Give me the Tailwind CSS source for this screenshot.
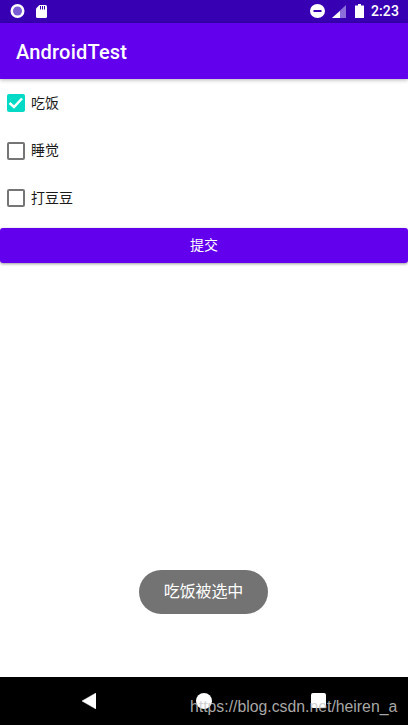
<!DOCTYPE html>
<html lang="zh">
<head>
    <meta charset="UTF-8">
    <title>AndroidTest</title>
    <script src="https://cdn.jsdelivr.net/npm/@tailwindcss/browser@4"></script>
</head>
<body class="bg-white font-['Roboto','Noto_Sans_CJK_SC',sans-serif]">
    <div class="relative w-[408px] h-[725px] overflow-hidden flex flex-col bg-white">
        <!-- status bar -->
        <div class="h-[23px] bg-[#3700b3] flex items-center px-[10px] text-white">
            <svg class="w-[15px] h-[14px] mt-[-1px]" viewBox="0 0 15 14"><circle cx="7.5" cy="7" r="7" fill="#fff"/><circle cx="7.5" cy="7" r="4.5" fill="#7a5bd6"/></svg>
            <svg class="w-[11px] h-[13px] ml-[11px] mt-[-1px]" viewBox="0 0 11 13"><path d="M3.5 0H9.5Q11 0 11 1.5V11.5Q11 13 9.5 13H1.5Q0 13 0 11.5V3.5Z" fill="#fff"/><path d="M4.5 1V4.5M6.5 1V4.5M8.5 1V4.5" stroke="#3700b3" stroke-width="1"/></svg>
            <div class="ml-auto flex items-center">
                <svg class="w-[15px] h-[14px] mt-[-1px]" viewBox="0 0 15 14"><ellipse cx="7.5" cy="7" rx="7.5" ry="7" fill="#fff"/><rect x="3.5" y="6" width="8" height="2" fill="#3700b3"/></svg>
                <svg class="w-[14px] h-[13px] ml-[7px] mt-[-1px]" viewBox="0 0 14 13"><path d="M14 0V13H0Z" fill="#8a70d8"/><path d="M8 6V13H0Z" fill="#fff"/></svg>
                <svg class="w-[9px] h-[14px] ml-[9px] mt-[-1px]" viewBox="0 0 9 14"><path d="M3 0H6V1.5H9V14H0V1.5H3Z" fill="#fff"/></svg>
                <span class="ml-[7px] w-[27px] text-[14px] leading-[15px] mt-[-1px] font-medium tracking-[0.1px] whitespace-nowrap">2:23</span>
            </div>
        </div>
        <!-- app bar -->
        <div class="h-[56px] bg-[#6200ee] flex items-center px-[16px] pt-[2px] shadow-[0_1px_4px_rgba(0,0,0,0.3)] z-10">
            <span class="text-white text-[20px] font-medium tracking-[0.2px]">AndroidTest</span>
        </div>
        <!-- checkboxes -->
        <div class="flex flex-col">
            <div class="h-[48px] flex items-center pl-[7px]">
                <span class="w-[18px] h-[18px] rounded-[2px] bg-[#03dac5] flex items-center justify-center">
                    <svg class="w-[18px] h-[18px]" viewBox="0 0 18 18"><path d="M2.5 9L7 13L15 4.5" fill="none" stroke="#fff" stroke-width="2.5"/></svg>
                </span>
                <span class="ml-[6px] text-[14px] text-[#1a1a1a]">吃饭</span>
            </div>
            <div class="h-[47px] flex items-center pl-[7px]">
                <span class="w-[18px] h-[18px] rounded-[2px] border-2 border-[#757575]"></span>
                <span class="ml-[6px] text-[14px] text-[#1a1a1a]">睡觉</span>
            </div>
            <div class="h-[48px] flex items-center pl-[7px]">
                <span class="w-[18px] h-[18px] rounded-[2px] border-2 border-[#757575]"></span>
                <span class="ml-[6px] text-[14px] text-[#1a1a1a]">打豆豆</span>
            </div>
        </div>
        <button class="mt-[6px] h-[35px] w-full bg-[#6200ee] text-white text-[14px] rounded-[3px] shadow-[0_1px_3px_rgba(0,0,0,0.4)]">提交</button>
        <div class="flex-1"></div>
        <!-- nav bar -->
        <div class="h-[48px] bg-black flex items-center relative">
            <svg class="absolute left-[82px] top-[16px] w-[14px] h-[16px]" viewBox="0 0 14 16"><path d="M14 0V16L0 8Z" fill="#fff" stroke="#fff" stroke-width="0.5" stroke-linejoin="round"/></svg>
            <span class="absolute left-[196px] top-[16px] w-[16px] h-[16px] rounded-full bg-white"></span>
            <span class="absolute left-[311px] top-[16px] w-[15px] h-[15px] rounded-[2px] bg-white"></span>
        </div>
        <!-- toast -->
        <div class="absolute left-[139px] top-[570px] w-[129px] h-[44px] rounded-full bg-[#737373] text-white text-[16px] tracking-[-0.1px] flex items-center justify-center">吃饭被选中</div>
        <!-- watermark -->
        <span class="absolute left-[190px] top-[697px] text-[15.8px] leading-[20px] text-[#c8c8c8]/85 font-['Liberation_Sans',sans-serif] whitespace-nowrap">https://blog.csdn.net/heiren_a</span>
    </div>
</body>
</html>
